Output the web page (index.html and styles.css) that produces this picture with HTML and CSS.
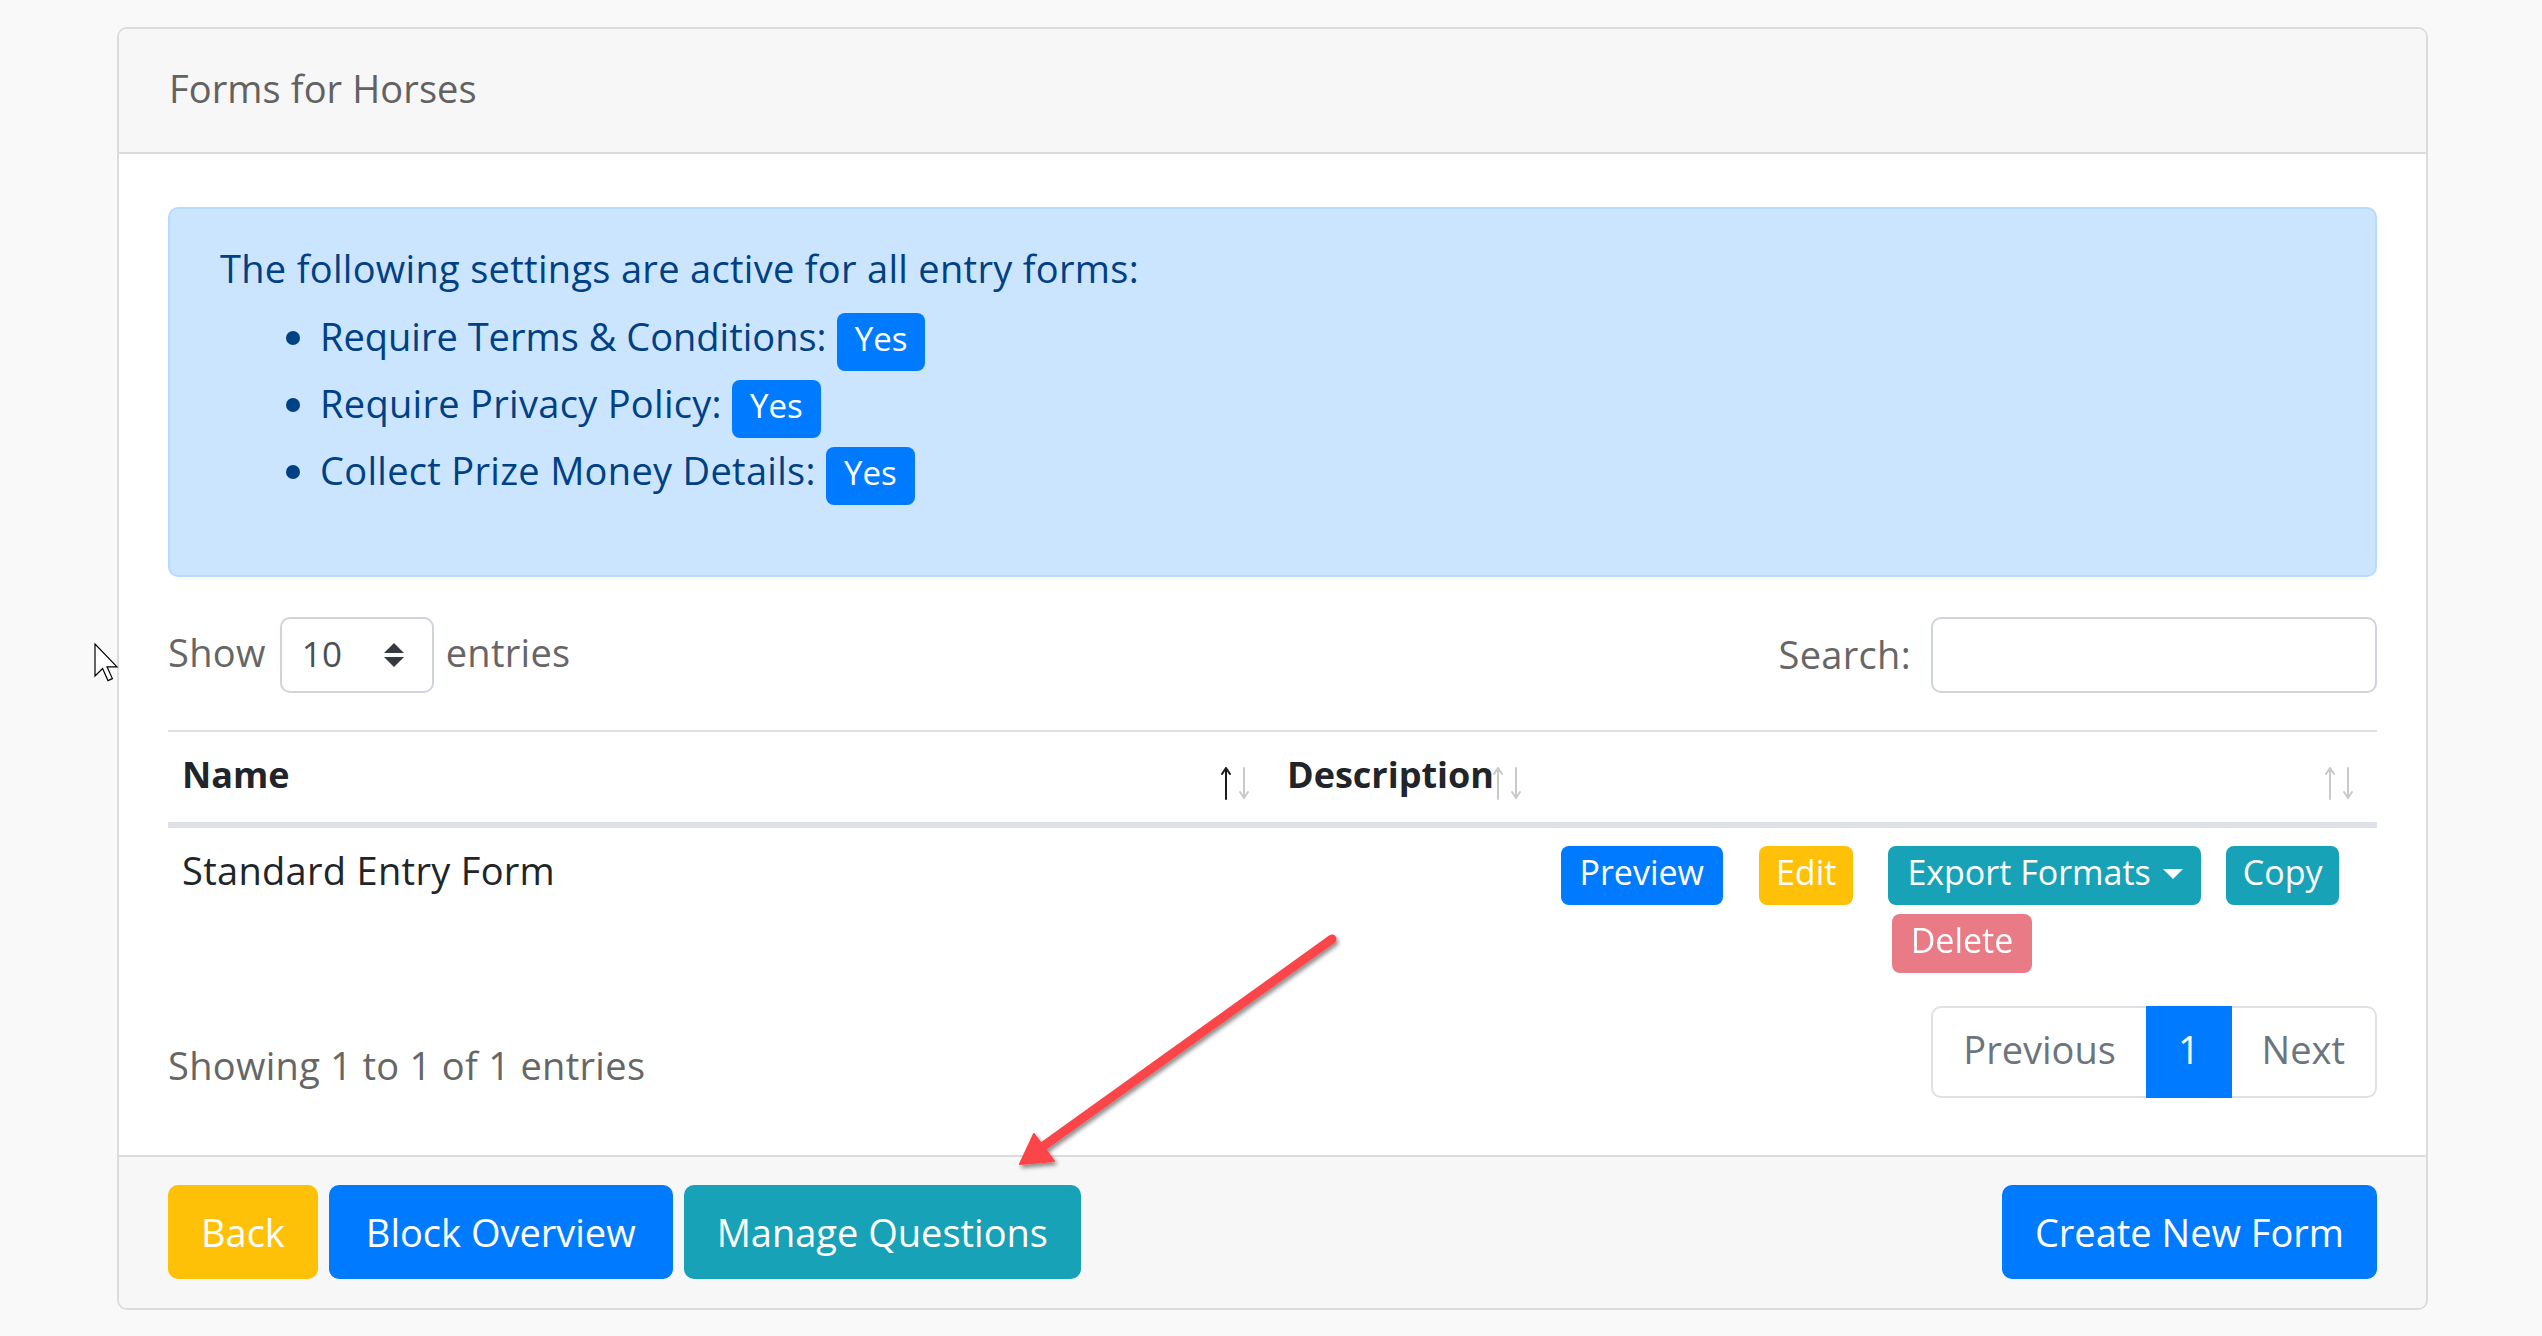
FILE: index.html
```html
<!DOCTYPE html>
<html lang="en">
<head>
<meta charset="utf-8">
<title>Forms for Horses</title>
<link rel="stylesheet" href="styles.css">
</head>
<body>
<div class="page">
  <div class="card">
    <div class="card-header">Forms for Horses</div>

    <div class="card-body">
      <div class="alert">
        <p>The following settings are active for all entry forms:</p>
        <ul>
          <li><span class="tight">Require Terms &amp; Conditions:</span> <span class="badge">Yes</span></li>
          <li>Require Privacy Policy: <span class="badge">Yes</span></li>
          <li>Collect Prize Money Details: <span class="badge">Yes</span></li>
        </ul>
      </div>

      <div class="dt-top">
        <label class="dt-length">
          <span class="dt-label">Show</span>
          <span class="select">
            <span class="select-value">10</span>
            <svg class="select-icon" width="20" height="24" viewBox="0 0 20 24"><path d="M10 0 L20 10 L0 10 Z M0 14 L20 14 L10 24 Z" fill="#343a40"/></svg>
          </span>
          <span class="dt-label">entries</span>
        </label>
        <label class="dt-filter">
          <span class="dt-label">Search:</span>
          <input class="search-input" type="search">
        </label>
      </div>

      <table class="dt">
        <colgroup>
          <col class="col-name">
          <col class="col-desc">
          <col class="col-actions">
        </colgroup>
        <thead>
          <tr>
            <th>Name
              <svg class="sort" width="30" height="34" viewBox="0 0 30 34"><g fill="none" stroke-width="2" stroke-linecap="round" stroke-linejoin="round"><path class="up on" d="M5 33 V2 M1 8 L5 2 L9 8"/><path class="down" d="M23 2 V32 M19 26 L23 32 L27 26"/></g></svg>
            </th>
            <th>Description
              <svg class="sort" width="30" height="34" viewBox="0 0 30 34"><g fill="none" stroke-width="2" stroke-linecap="round" stroke-linejoin="round"><path class="up" d="M5 33 V2 M1 8 L5 2 L9 8"/><path class="down" d="M23 2 V32 M19 26 L23 32 L27 26"/></g></svg>
            </th>
            <th>
              <svg class="sort" width="30" height="34" viewBox="0 0 30 34"><g fill="none" stroke-width="2" stroke-linecap="round" stroke-linejoin="round"><path class="up" d="M5 33 V2 M1 8 L5 2 L9 8"/><path class="down" d="M23 2 V32 M19 26 L23 32 L27 26"/></g></svg>
            </th>
          </tr>
        </thead>
        <tbody>
          <tr>
            <td>Standard Entry Form</td>
            <td></td>
            <td class="actions">
              <div class="btn-row">
                <a class="btn btn-sm btn-primary gap-36">Preview</a>
                <a class="btn btn-sm btn-warning btn-narrow gap-35">Edit</a>
                <a class="btn btn-sm btn-info btn-toggle gap-25">Export Formats<span class="caret"></span></a>
                <a class="btn btn-sm btn-info btn-narrow gap-24">Copy</a>
                <a class="btn btn-sm btn-danger disabled">Delete</a>
              </div>
            </td>
          </tr>
        </tbody>
      </table>

      <div class="dt-bottom">
        <div class="dt-info">Showing 1 to 1 of 1 entries</div>
        <div class="pagination">
          <span class="page-link disabled first">Previous</span>
          <span class="page-link active">1</span>
          <span class="page-link disabled last">Next</span>
        </div>
      </div>
    </div>

    <div class="card-footer">
      <div class="footer-left">
        <a class="btn btn-lg btn-warning">Back</a>
        <a class="btn btn-lg btn-primary btn-wide">Block Overview</a>
        <a class="btn btn-lg btn-info">Manage Questions</a>
      </div>
      <a class="btn btn-lg btn-primary">Create New Form</a>
    </div>
  </div>

  <!-- callout arrow drawn over the page -->
  <svg class="annotation" width="2542" height="1336" viewBox="0 0 2542 1336">
    <defs>
      <filter id="arrow-shadow" x="-20%" y="-20%" width="140%" height="140%">
        <feDropShadow dx="2" dy="3" stdDeviation="2" flood-color="#000" flood-opacity="0.45"/>
      </filter>
    </defs>
    <g filter="url(#arrow-shadow)" fill="#fb4449" stroke="#fb4449">
      <line x1="1332" y1="939" x2="1038" y2="1150" stroke-width="9" stroke-linecap="round"/>
      <polygon points="1020,1164 1034,1134 1054,1161" stroke-width="2" stroke-linejoin="round"/>
    </g>
  </svg>

  <!-- mouse pointer -->
  <svg class="cursor" width="26" height="42" viewBox="0 0 13 21">
    <path d="M0.5 0.5 L0.5 16.5 L4.3 12.8 L7 18.8 L9.2 17.8 L6.5 11.9 L11.5 11.9 Z" fill="#fff" stroke="#000" stroke-width="0.6" stroke-linejoin="miter"/>
  </svg>
</div>
</body>
</html>
```

FILE: styles.css
```css
* {
  box-sizing: border-box;
}

html, body {
  margin: 0;
  background: #f9f9f9;
}

body {
  font-family: "Open Sans", "Noto Sans", sans-serif;
  font-size: 38px;
  letter-spacing: 0.3px;
  line-height: 61px;
  color: #212529;
}

.page {
  position: relative;
  width: 2542px;
  height: 1336px;
  padding: 27px 0 0 117px;
  overflow: hidden;
}

/* ---------- card ---------- */
.card {
  width: 2311px;
  background: #fff;
  border: 2px solid #dcdcdc;
  border-radius: 10px;
  overflow: hidden;
}

.card-header {
  background: #f7f7f7;
  border-bottom: 2px solid #dcdcdc;
  padding: 29px 50px 33px;
  color: #626262;
  letter-spacing: 0.1px;
}

.card-body {
  padding: 53px 49px 57px;
}

/* ---------- alert ---------- */
.alert {
  background: #cce5ff;
  border: 2px solid #b8daff;
  border-radius: 10px;
  color: #004085;
  padding: 29px 50px;
  margin-bottom: 40px;
}

.alert p {
  margin: 0 0 5px;
}

.alert ul {
  margin: 0 0 41px;
  padding-left: 100px;
}

.alert li {
  line-height: 64px;
}

.tight {
  letter-spacing: 0;
}

.badge {
  display: inline-block;
  font-size: 33px;
  line-height: 33px;
  letter-spacing: 0;
  padding: 9px 18px 16px;
  background: #007bff;
  color: #fff;
  border-radius: 8px;
}

/* ---------- datatable controls ---------- */
.dt-top {
  display: flex;
  justify-content: space-between;
  align-items: center;
  margin-bottom: 37px;
}

.dt-length,
.dt-filter {
  display: flex;
  align-items: baseline;
}

.dt-label {
  color: #666;
}

.select {
  display: flex;
  align-items: center;
  width: 154px;
  height: 76px;
  margin: 0 12px 0 14px;
  padding: 0 28px 4px 20px;
  border: 2px solid #ced4da;
  border-radius: 10px;
  background: #fff;
  font-size: 35px;
  color: #495057;
}

.select-icon {
  margin-left: auto;
  margin-top: 4px;
}

.search-input {
  width: 446px;
  height: 76px;
  margin-left: 20px;
  padding: 0 20px;
  border: 2px solid #ced4da;
  border-radius: 10px;
  background: #fff;
  font-family: inherit;
  font-size: 35px;
  color: #495057;
  outline: none;
}

/* ---------- table ---------- */
.dt {
  width: 100%;
  border-collapse: collapse;
  table-layout: fixed;
}

.col-name { width: 1105px; }
.col-desc { width: 272px; }
.col-actions { width: 832px; }

.dt th {
  position: relative;
  text-align: left;
  font-size: 36px;
  font-weight: 700;
  letter-spacing: 0;
  padding: 12px 14px 17px;
  border-top: 2px solid #dee2e6;
  border-bottom: 6px solid #dee2e6;
}

.sort {
  position: absolute;
  right: 22px;
  top: 34px;
}

.sort path {
  stroke: #c9c9c9;
}

.sort path.on {
  stroke: #1b1b1b;
}

.dt td {
  vertical-align: top;
  padding: 12px 12px 12px 14px;
}

.actions {
  text-align: center;
}

.btn-row {
  display: flex;
  flex-wrap: wrap;
  justify-content: center;
  align-items: baseline;
  row-gap: 9px;
  margin-top: 6px;
}

/* ---------- buttons ---------- */
.btn {
  display: inline-block;
  color: #fff;
  text-decoration: none;
  letter-spacing: 0;
  border-radius: 8px;
  white-space: nowrap;
}

.btn-sm {
  font-size: 34px;
  line-height: 34px;
  padding: 9px 19px 16px;
}

.btn-sm.btn-narrow {
  padding-left: 17px;
  padding-right: 17px;
}

.btn-sm.btn-toggle {
  padding-right: 18px;
}

.btn-lg {
  font-size: 38px;
  line-height: 62px;
  padding: 14px 31px;
  border: 2px solid transparent;
  border-radius: 10px;
}

.btn-lg.btn-wide {
  padding-left: 35px;
  padding-right: 35px;
}

.btn-primary { background: #007bff; border-color: #007bff; }
.btn-warning { background: #ffc107; border-color: #ffc107; }
.btn-info    { background: #17a2b8; border-color: #17a2b8; }
.btn-danger  { background: #dc3545; border-color: #dc3545; }
.btn.disabled { opacity: 0.65; }

.gap-36 { margin-right: 36px; }
.gap-35 { margin-right: 35px; }
.gap-25 { margin-right: 25px; }
.gap-24 { margin-right: 24px; }

.caret {
  display: inline-block;
  margin-left: 12px;
  vertical-align: 6px;
  border-top: 10px solid #fff;
  border-left: 10px solid transparent;
  border-right: 10px solid transparent;
}

/* ---------- info + pagination ---------- */
.dt-bottom {
  display: flex;
  justify-content: space-between;
  align-items: flex-start;
  margin-top: 21px;
}

.dt-info {
  padding-top: 29px;
  color: #666;
}

.pagination {
  display: flex;
}

.page-link {
  display: block;
  height: 92px;
  padding: 11px 30px 0;
  border: 2px solid #dee2e6;
  margin-left: -2px;
  background: #fff;
  color: #6c757d;
  letter-spacing: 0;
}

.page-link.first {
  margin-left: 0;
  border-radius: 10px 0 0 10px;
}

.page-link.last {
  border-radius: 0 10px 10px 0;
}

.page-link.active {
  position: relative;
  background: #007bff;
  border-color: #007bff;
  color: #fff;
}

/* ---------- footer ---------- */
.card-footer {
  display: flex;
  justify-content: space-between;
  align-items: center;
  background: #f7f7f7;
  border-top: 2px solid #dcdcdc;
  padding: 28px 49px 29px;
}

.footer-left {
  display: flex;
  gap: 11px;
}

/* ---------- overlays ---------- */
.annotation {
  position: absolute;
  left: 0;
  top: 0;
  pointer-events: none;
}

.cursor {
  position: absolute;
  left: 94px;
  top: 643px;
  pointer-events: none;
}
```
